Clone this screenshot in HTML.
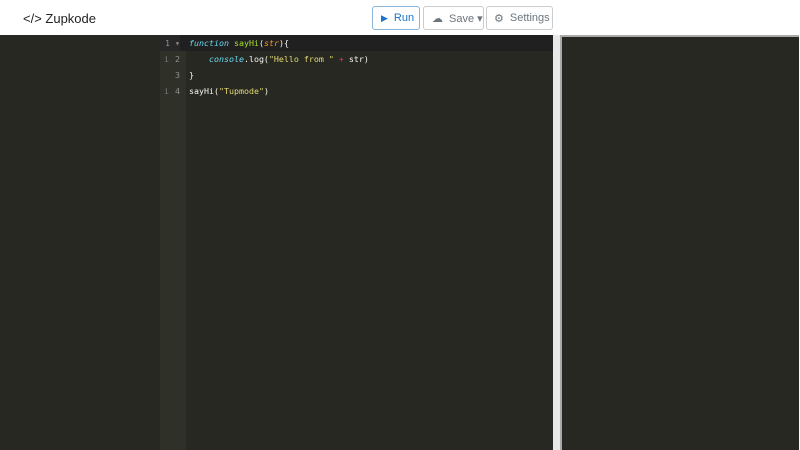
<!DOCTYPE html>
<html><head><style>
body{margin:0;width:800px;height:450px;overflow:hidden;background:#fff;font-family:"Liberation Sans",sans-serif;position:relative}
.nav{height:35px;position:relative}
.brand{position:absolute;left:23px;top:11px;font-size:13px;color:#222}
.btn{position:absolute;top:6px;border:1px solid #ccc;border-radius:3px;font-size:11px;color:#6c757d;display:flex;align-items:center;box-sizing:border-box;height:24px}
.run{left:372px;width:48px;border-color:#8ab4d8;color:#1a73c8}
.save{left:423px;width:61px}
.set{left:486px;width:67px}
.main{position:absolute;top:35px;left:0;width:553px;height:415px;background:#272822}
.gut{position:absolute;left:160px;top:0;width:26px;height:415px;background:#2f3129}
.line{position:absolute;left:160px;width:393px;height:16px;font-family:"DejaVu Sans Mono",monospace;font-size:8.3px;line-height:16px;color:#f8f8f2}
.num{position:absolute;left:0;width:20px;text-align:right;color:#8f908a}
.code{position:absolute;left:29px;white-space:pre}
.kw{color:#66d9ef;font-style:italic}.fn{color:#a6e22e}.pa{color:#fd971f;font-style:italic}.st{color:#e6db74}.op{color:#f92672}
.div{position:absolute;left:553px;top:35px;width:7px;height:415px;background:#e8e8e8}
.right{position:absolute;left:560px;top:35px;width:239px;height:415px;background:#272822;border-left:2px solid #aaa;border-top:2px solid #aaa;box-sizing:border-box}
</style></head><body>
<div class="nav"><div class="brand">&lt;/&gt; Zupkode</div>
<div class="btn run"><span style="margin-left:8px;font-size:9px">▶</span><span style="margin-left:6px">Run</span></div>
<div class="btn save"><span style="margin-left:8px">☁</span><span style="margin-left:6px">Save ▾</span></div>
<div class="btn set"><span style="margin-left:7px">⚙</span><span style="margin-left:6px">Settings</span></div>
</div>
<div class="main">
<div class="gut"></div>
<div class="line" style="top:0;background:#202020"><span class="num" style="background:#272727">1 ▾</span><span class="code"><span class="kw">function</span> <span class="fn">sayHi</span>(<span class="pa">str</span>){</span></div>
<div class="line" style="top:16px"><span class="num"><span style="position:absolute;left:4px;color:#777">i</span>2</span><span class="code">    <span class="kw">console</span>.log(<span class="st">"Hello from "</span> <span class="op">+</span> str)</span></div>
<div class="line" style="top:32px"><span class="num">3</span><span class="code">}</span></div>
<div class="line" style="top:48px"><span class="num"><span style="position:absolute;left:4px;color:#777">i</span>4</span><span class="code">sayHi(<span class="st">"Tupmode"</span>)</span></div>
</div>
<div class="div"></div>
<div class="right"></div>
</body></html>
